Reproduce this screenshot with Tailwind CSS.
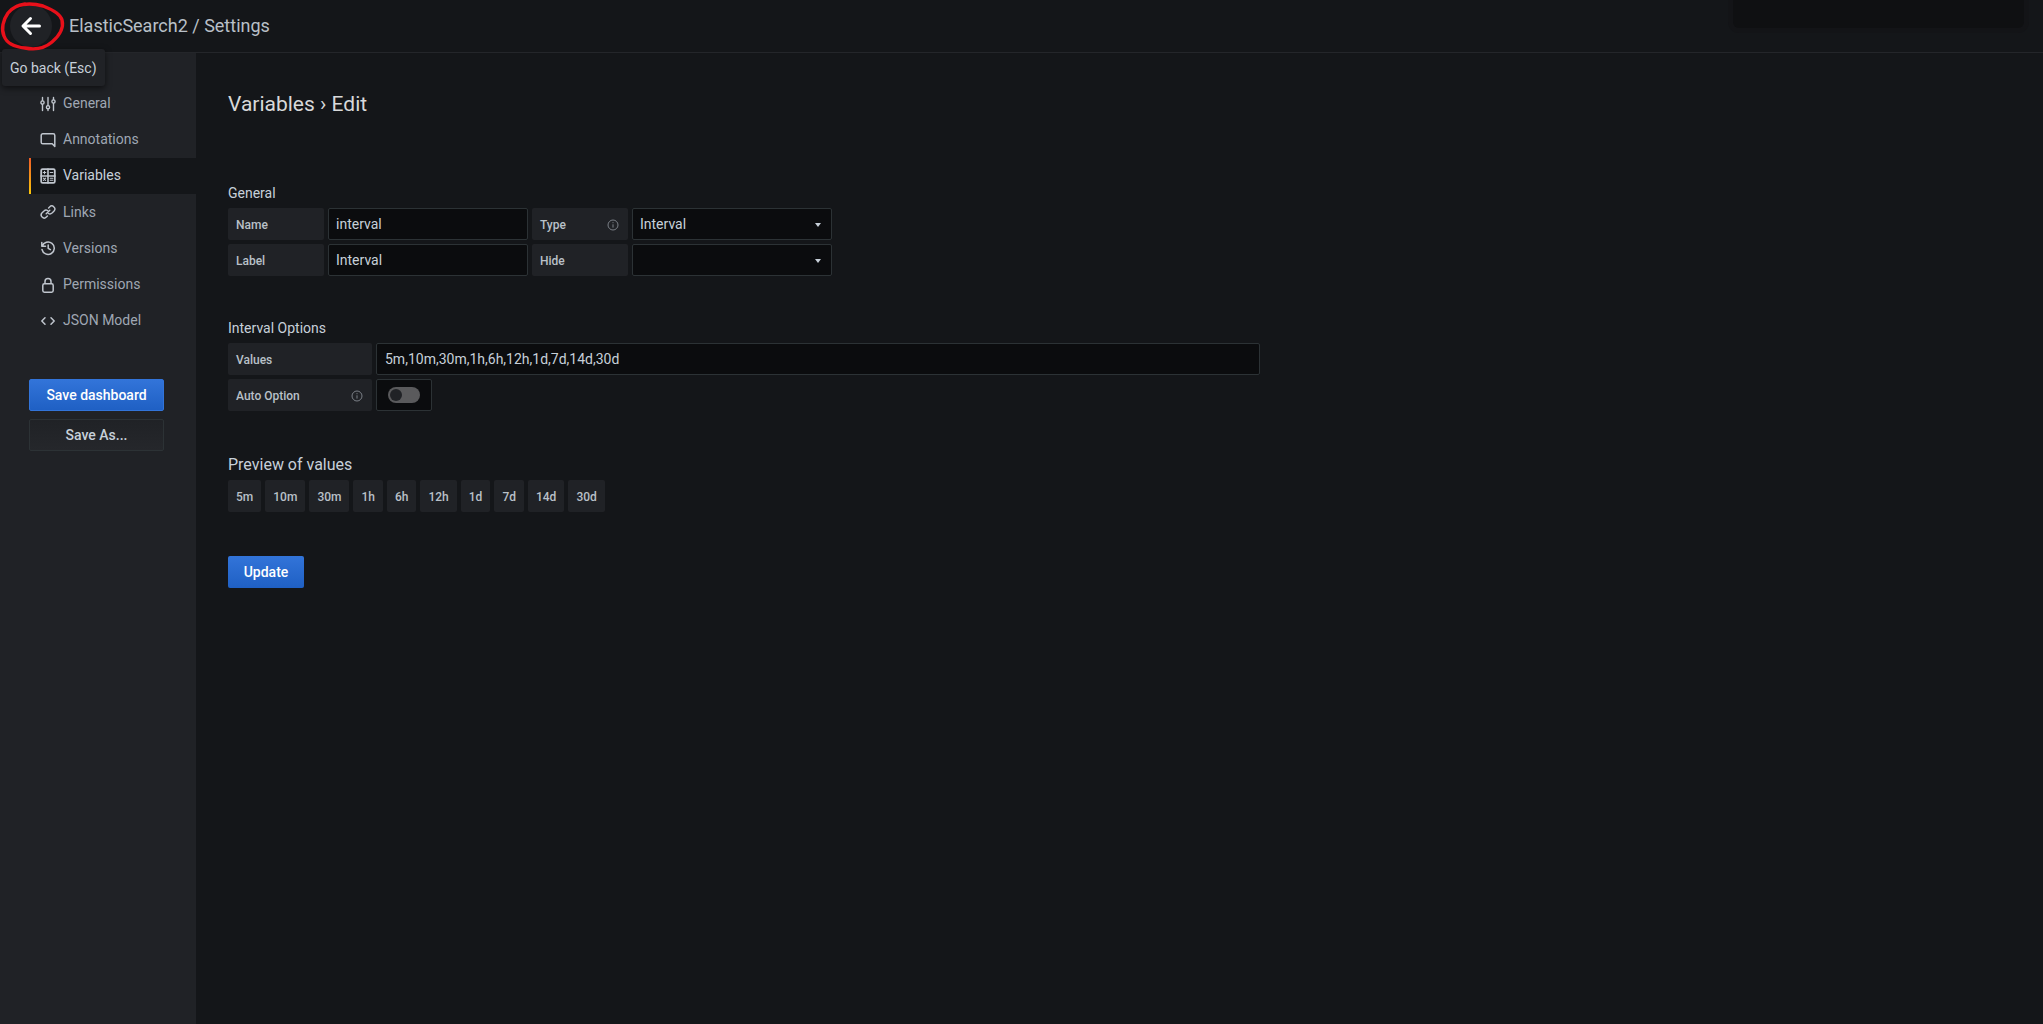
<!DOCTYPE html>
<html>
<head>
<meta charset="utf-8">
<script src="https://cdn.jsdelivr.net/npm/@tailwindcss/browser@4"></script>
</head>
<body class="bg-[#141619]">
<div class="relative w-[2043px] h-[1024px] overflow-hidden flex flex-col bg-[#141619] text-[#c7d0d9] font-['Roboto',sans-serif]">
  <header class="h-[53px] shrink-0 flex items-center border-b border-[#24262a] bg-[#141619] relative">
    <div class="w-[42px] h-[42px] ml-[10px] rounded-full bg-[#202226] flex items-center justify-center">
      <svg width="24" height="24" viewBox="0 0 24 24" fill="none" stroke="#ffffff" stroke-width="3" stroke-linecap="round" stroke-linejoin="round"><path d="M20.5 12H4.5M11.5 4.5 4 12l7.5 7.5"/></svg>
    </div>
    <div class="ml-[17px] pb-[1px] text-[18px] text-[#b9c0c8]">ElasticSearch2 / Settings</div>
    <div class="absolute right-[19px] top-0 w-[291px] h-[28px] bg-[#0f1012] rounded-b-md shadow-[0_0_0_5px_#131417]"></div>
  </header>
  <div class="flex flex-1 min-h-0">
    <aside class="w-[196px] shrink-0 bg-[#202226] pt-[32.5px] pl-[29px]">
      <nav class="flex flex-col text-[14px] text-[#9fa7b3]">
        <a class="h-[36.2px] flex items-center pl-[10.5px] gap-[7.5px]">
          <svg class="w-[16px] h-[16px] shrink-0" viewBox="0 0 16 16" fill="none" stroke="#c0c6ce" stroke-width="1.4" stroke-linecap="round"><path d="M2.5 1.5v3M2.5 8.5v6M8 1.5v8M8 13v1.5M13.5 1.5v2M13.5 7.5v7"/><circle cx="2.5" cy="6.5" r="1.6"/><circle cx="8" cy="11.2" r="1.6"/><circle cx="13.5" cy="5.5" r="1.6"/></svg>
          General</a>
        <a class="h-[36.2px] flex items-center pl-[10.5px] gap-[7.5px]">
          <svg class="w-[16px] h-[16px] shrink-0" viewBox="0 0 16 16" fill="none" stroke="#c0c6ce" stroke-width="1.5" stroke-linejoin="round"><path d="M2.8 1.8h10.4a1.6 1.6 0 0 1 1.6 1.6v11l-2.6-2.6H2.8a1.6 1.6 0 0 1-1.6-1.6V3.4a1.6 1.6 0 0 1 1.6-1.6Z"/></svg>
          Annotations</a>
        <a class="h-[36.2px] flex items-center pl-[8.5px] gap-[7.5px] bg-[#141619] border-l-2 border-[#f05a28] [border-image:linear-gradient(#f05a28,#fbca0a)_1] text-[#c7d0d9]">
          <svg class="w-[16px] h-[16px] shrink-0" viewBox="0 0 16 16" fill="none" stroke="#c0c6ce" stroke-width="1.1" stroke-linecap="round"><rect x="1.2" y="1.2" width="13.6" height="13.6" rx="1.4" stroke-width="1.8"/><path d="M8 1v14M1 8h14" stroke-width="1.6"/><path d="M3.2 4.5h2.6M4.5 3.2v2.6M10.2 4.5h2.6M3.4 10.2l2.2 2.2M5.6 10.2l-2.2 2.2M10.2 10.3h2.6M10.2 12.3h2.6"/></svg>
          Variables</a>
        <a class="h-[36.2px] flex items-center pl-[10.5px] gap-[7.5px]">
          <svg class="w-[16px] h-[16px] shrink-0" viewBox="0 0 16 16" fill="none" stroke="#c0c6ce" stroke-width="1.4" stroke-linecap="round"><path d="m6.2 9.8 3.6-3.6M8.6 3.9l1-1a3 3 0 0 1 4.3 4.3l-1.9 1.9a3 3 0 0 1-3.6.4M7.4 12.1l-1 1a3 3 0 0 1-4.3-4.3L4 6.9a3 3 0 0 1 3.6-.4"/></svg>
          Links</a>
        <a class="h-[36.2px] flex items-center pl-[10.5px] gap-[7.5px]">
          <svg class="w-[16px] h-[16px] shrink-0" viewBox="0 0 16 16" fill="none" stroke="#c0c6ce" stroke-width="1.5" stroke-linecap="round" stroke-linejoin="round"><path d="M2.2 6.2A6.2 6.2 0 1 1 2 9.5M1.8 2.6v3.7h3.7M8.2 5v3.4l2.2 1.3"/></svg>
          Versions</a>
        <a class="h-[36.2px] flex items-center pl-[10.5px] gap-[7.5px]">
          <svg class="w-[16px] h-[16px] shrink-0" viewBox="0 0 16 16" fill="none" stroke="#c0c6ce" stroke-width="1.5"><rect x="2.8" y="6.8" width="10.4" height="8.4" rx="1.6"/><path d="M5 6.8V4.6a3 3 0 0 1 6 0v2.2"/></svg>
          Permissions</a>
        <a class="h-[36.2px] flex items-center pl-[10.5px] gap-[7.5px]">
          <svg class="w-[16px] h-[16px] shrink-0" viewBox="0 0 16 16" fill="none" stroke="#c0c6ce" stroke-width="1.5" stroke-linecap="round" stroke-linejoin="round"><path d="M5 4.8 1.8 8 5 11.2M11 4.8 14.2 8 11 11.2"/></svg>
          JSON Model</a>
      </nav>
      <div class="mt-[40.5px] w-[135px] flex flex-col gap-[8px]">
        <button class="h-[32px] rounded-[2px] border border-[#3274d9] bg-gradient-to-b from-[#3274d9] to-[#1f60c4] text-white text-[14px] font-medium">Save dashboard</button>
        <button class="h-[32px] rounded-[2px] border border-[#2c3235] bg-gradient-to-b from-[#202226] to-[#25272b] text-[#c7d0d9] text-[14px] font-medium">Save As...</button>
      </div>
    </aside>
    <main class="flex-1 pl-[32px] pt-[37px]">
      <h1 class="text-[21px] leading-[28px] text-[#d8d9da] font-normal">Variables › Edit</h1>

      <section class="mt-[67px]">
        <h3 class="text-[14px] leading-[16px] h-[23px] text-[#c7d0d9]">General</h3>
        <div class="flex flex-col gap-[4px] w-[604px]">
          <div class="flex gap-[4px] h-[32px]">
            <div class="w-[96px] pt-[1px] rounded-[2px] bg-[#202226] flex items-center px-[8px] text-[12px] font-medium text-[#b9c0c8]">Name</div>
            <div class="w-[200px] pt-[1px] rounded-[2px] bg-[#0b0c0e] border border-[#2c3235] flex items-center px-[7px] text-[14px] text-[#c7d0d9]">interval</div>
            <div class="w-[96px] pt-[1px] rounded-[2px] bg-[#202226] flex items-center justify-between pl-[8px] pr-[9px] text-[12px] font-medium text-[#b9c0c8]">Type
              <svg class="w-[12px] h-[12px]" viewBox="0 0 12 12" fill="none" stroke="#7b8087" stroke-width="1"><circle cx="6" cy="6" r="5"/><path d="M6 5.3v3.3M6 3.2v1" /></svg>
            </div>
            <div class="w-[200px] rounded-[2px] bg-[#0b0c0e] border border-[#2c3235] flex items-center justify-between pl-[7px] pr-[10px] text-[14px] text-[#c7d0d9]">Interval
              <span class="w-0 h-0 mt-[1px] border-x-[3px] border-x-transparent border-t-[4px] border-t-[#c7d0d9]"></span>
            </div>
          </div>
          <div class="flex gap-[4px] h-[32px]">
            <div class="w-[96px] pt-[1px] rounded-[2px] bg-[#202226] flex items-center px-[8px] text-[12px] font-medium text-[#b9c0c8]">Label</div>
            <div class="w-[200px] pt-[1px] rounded-[2px] bg-[#0b0c0e] border border-[#2c3235] flex items-center px-[7px] text-[14px] text-[#c7d0d9]">Interval</div>
            <div class="w-[96px] pt-[1px] rounded-[2px] bg-[#202226] flex items-center px-[8px] text-[12px] font-medium text-[#b9c0c8]">Hide</div>
            <div class="w-[200px] rounded-[2px] bg-[#0b0c0e] border border-[#2c3235] flex items-center justify-end pr-[10px]">
              <span class="w-0 h-0 mt-[1px] border-x-[3px] border-x-transparent border-t-[4px] border-t-[#c7d0d9]"></span>
            </div>
          </div>
        </div>
      </section>

      <section class="mt-[44px]">
        <h3 class="text-[14px] leading-[16px] h-[23px] text-[#c7d0d9]">Interval Options</h3>
        <div class="flex flex-col gap-[4px]">
          <div class="flex gap-[4px] h-[32px]">
            <div class="w-[144px] pt-[1px] rounded-[2px] bg-[#202226] flex items-center px-[8px] text-[12px] font-medium text-[#b9c0c8]">Values</div>
            <div class="w-[884px] pt-[1px] rounded-[2px] bg-[#0b0c0e] border border-[#2c3235] flex items-center px-[8px] text-[14px] text-[#c7d0d9]">5m,10m,30m,1h,6h,12h,1d,7d,14d,30d</div>
          </div>
          <div class="flex gap-[4px] h-[32px]">
            <div class="w-[144px] pt-[1px] rounded-[2px] bg-[#202226] flex items-center justify-between pl-[8px] pr-[9px] text-[12px] font-medium text-[#b9c0c8]">Auto Option
              <svg class="w-[12px] h-[12px]" viewBox="0 0 12 12" fill="none" stroke="#7b8087" stroke-width="1"><circle cx="6" cy="6" r="5"/><path d="M6 5.3v3.3M6 3.2v1" /></svg>
            </div>
            <div class="w-[56px] rounded-[2px] bg-[#0b0c0e] border border-[#2c3235] flex items-center justify-center">
              <div class="w-[32px] h-[16px] rounded-full bg-[#5a5a5c] flex items-center pl-[2px]">
                <div class="w-[12px] h-[12px] rounded-full bg-[#202226]"></div>
              </div>
            </div>
          </div>
        </div>
      </section>

      <section class="mt-[44px]">
        <h3 class="text-[16px] leading-[18px] h-[25px] pt-[1px] text-[#c7d0d9]">Preview of values</h3>
        <div class="flex gap-[4px] text-[12px] font-medium text-[#b9c0c8]">
          <span class="h-[32px] pt-[1px] px-[8px] rounded-[2px] bg-[#202226] flex items-center">5m</span>
          <span class="h-[32px] pt-[1px] px-[8px] rounded-[2px] bg-[#202226] flex items-center">10m</span>
          <span class="h-[32px] pt-[1px] px-[8px] rounded-[2px] bg-[#202226] flex items-center">30m</span>
          <span class="h-[32px] pt-[1px] px-[8px] rounded-[2px] bg-[#202226] flex items-center">1h</span>
          <span class="h-[32px] pt-[1px] px-[8px] rounded-[2px] bg-[#202226] flex items-center">6h</span>
          <span class="h-[32px] pt-[1px] px-[8px] rounded-[2px] bg-[#202226] flex items-center">12h</span>
          <span class="h-[32px] pt-[1px] px-[8px] rounded-[2px] bg-[#202226] flex items-center">1d</span>
          <span class="h-[32px] pt-[1px] px-[8px] rounded-[2px] bg-[#202226] flex items-center">7d</span>
          <span class="h-[32px] pt-[1px] px-[8px] rounded-[2px] bg-[#202226] flex items-center">14d</span>
          <span class="h-[32px] pt-[1px] px-[8px] rounded-[2px] bg-[#202226] flex items-center">30d</span>
        </div>
      </section>

      <button class="mt-[44px] w-[76px] h-[32px] pt-[1px] rounded-[2px] bg-gradient-to-b from-[#3274d9] to-[#1f60c4] text-white text-[14px] font-medium">Update</button>
    </main>
  </div>

  <div class="absolute left-[2px] top-[49px] w-[103px] h-[37px] pt-[1px] rounded-[3px] bg-[#202226] shadow-[0_2px_6px_rgba(0,0,0,0.6)] flex items-center pl-[8px] text-[14px] text-[#c7d0d9]">Go back (Esc)</div>
  <svg class="absolute left-0 top-0 pointer-events-none" width="70" height="56" viewBox="0 0 70 56" fill="none" stroke="#e8101a" stroke-width="3.4" stroke-linecap="round" stroke-linejoin="round"><path d="M17 6C26 3 36 4 43 6 51 9 60 13 62 20 64 28 59 36 52 42 45 48 35 50 25 48 15 47 7 44 4 36 1 29 3 20 8 13 12 8 18 5 25 4"/></svg>
</div>
</body>
</html>
